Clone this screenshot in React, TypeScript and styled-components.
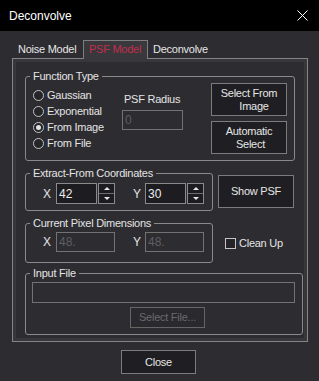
import styled, { createGlobalStyle } from "styled-components";

const Global = createGlobalStyle`
  html, body {
    margin: 0;
    background: #2d2c31;
  }
  body {
    font-family: "Liberation Sans", Arial, sans-serif;
    font-size: 11px;
    color: #e4e4e4;
    letter-spacing: -0.25px;
  }
  * { box-sizing: border-box; }
`;

const Window = styled.div`
  width: 319px;
  height: 381px;
  background: #2d2c31;
  overflow: hidden;
`;

const TitleBar = styled.div`
  height: 31px;
  background: #000;
  color: #fff;
  font-size: 12px;
  letter-spacing: 0;
  display: flex;
  align-items: center;
  justify-content: space-between;
  padding: 0 11px 0 9px;
`;

const Body = styled.div`
  padding: 9px 0 0 12px;
`;

const TabStrip = styled.div`
  display: flex;
  align-items: flex-end;
  height: 18px;
  padding-left: 1px;
  position: relative;
  z-index: 1;
`;

const Tab = styled.div<{ $active?: boolean; $w: number }>`
  width: ${(p) => p.$w}px;
  height: ${(p) => (p.$active ? 19 : 16)}px;
  margin-bottom: ${(p) => (p.$active ? -1 : 0)}px;
  padding-left: 5px;
  line-height: ${(p) => (p.$active ? 17 : 15)}px;
  color: ${(p) => (p.$active ? "#c12f4c" : "#e6e6e6")};
  background: ${(p) => (p.$active ? "#39383d" : "transparent")};
  border: ${(p) => (p.$active ? "1px solid #7e7e7e" : "none")};
  border-bottom: none;
  white-space: nowrap;
`;

const Panel = styled.div`
  width: 296px;
  height: 284px;
  border: 1px solid #858585;
  box-shadow: inset 0 0 0 3px #38373c;
  padding: 17px 0 0 12px;
  display: flex;
  flex-direction: column;
`;

const Row = styled.div<{ $mt?: number }>`
  display: flex;
  align-items: center;
  margin-top: ${(p) => p.$mt ?? 0}px;
`;

const Group = styled.div<{ $w: number; $h: number; $mt?: number }>`
  position: relative;
  width: ${(p) => p.$w}px;
  height: ${(p) => p.$h}px;
  margin-top: ${(p) => p.$mt ?? 0}px;
  border: 1px solid #8a8a8a;
  border-radius: 3px;
  flex-shrink: 0;
`;

const Legend = styled.span`
  position: absolute;
  top: -7px;
  left: 4px;
  padding: 0 3px;
  line-height: 13px;
  background: #2d2c31;
  white-space: nowrap;
`;

const FuncBody = styled.div`
  display: flex;
  align-items: flex-start;
  padding-left: 7px;
`;

const RadioCol = styled.div`
  width: 89px;
  margin-top: 10px;
  display: flex;
  flex-direction: column;
`;

const RadioRow = styled.div`
  height: 16px;
  display: flex;
  align-items: center;
  gap: 3px;
`;

const Radio = styled.span<{ $checked?: boolean }>`
  width: 11px;
  height: 11px;
  border-radius: 50%;
  border: 1px solid #c4c4c4;
  background: #252428;
  display: flex;
  align-items: center;
  justify-content: center;
  &::after {
    content: "";
    display: ${(p) => (p.$checked ? "block" : "none")};
    width: 5px;
    height: 5px;
    border-radius: 50%;
    background: #e4e4e4;
  }
`;

const PsfCol = styled.div`
  width: 89px;
  margin-top: 15px;
  display: flex;
  flex-direction: column;
  gap: 4px;
`;

const FieldLabel = styled.div`
  line-height: 14px;
  padding-left: 2px;
`;

const TextBox = styled.div<{ $w: number; $h?: number; $disabled?: boolean }>`
  width: ${(p) => p.$w}px;
  height: ${(p) => p.$h ?? 20}px;
  border: 1px solid ${(p) => (p.$disabled ? "#727272" : "#8a8a8a")};
  background: ${(p) => (p.$disabled ? "#2d2c31" : "#1d1c20")};
  color: ${(p) => (p.$disabled ? "#5f5f62" : "#ececec")};
  font-size: 12px;
  letter-spacing: 0;
  padding-left: 2px;
  display: flex;
  align-items: center;
  flex-shrink: 0;
`;

const ButtonCol = styled.div`
  margin-top: 6px;
  display: flex;
  flex-direction: column;
  gap: 5px;
`;

const Button = styled.button<{ $w: number; $h: number; $disabled?: boolean; $mt?: number; $ml?: number }>`
  width: ${(p) => p.$w}px;
  height: ${(p) => p.$h}px;
  margin: ${(p) => p.$mt ?? 0}px 0 0 ${(p) => p.$ml ?? 0}px;
  padding: 0;
  background: ${(p) => (p.$disabled ? "#2a292d" : "#1f1e22")};
  border: 1px solid ${(p) => (p.$disabled ? "#656565" : "#7c7c7c")};
  color: ${(p) => (p.$disabled ? "#6a6a6d" : "#e6e6e6")};
  font: inherit;
  letter-spacing: inherit;
  line-height: 13px;
  text-align: center;
  flex-shrink: 0;
  align-self: flex-start;
`;

const Line = styled.span<{ $shift?: number }>`
  display: block;
  padding-left: ${(p) => p.$shift ?? 0}px;
`;

const CoordBody = styled.div<{ $pt: number }>`
  display: flex;
  align-items: center;
  padding: ${(p) => p.$pt}px 0 0 17px;
`;

const CoordLabel = styled.span<{ $w: number; $ml?: number }>`
  width: ${(p) => p.$w}px;
  margin-left: ${(p) => p.$ml ?? 0}px;
  font-size: 12px;
`;

const Nud = styled.div`
  display: flex;
  gap: 1px;
  width: 59px;
  height: 21px;
`;

const Spinner = styled.div`
  width: 17px;
  height: 21px;
  border: 1px solid #8a8a8a;
  background: #1d1c20;
  display: flex;
  flex-direction: column;
`;

const SpinHalf = styled.div<{ $up?: boolean }>`
  flex: 1;
  display: flex;
  align-items: center;
  justify-content: center;
  border-top: ${(p) => (p.$up ? "none" : "1px solid #6c6c6c")};
  &::after {
    content: "";
    border-left: 3px solid transparent;
    border-right: 3px solid transparent;
    ${(p) => (p.$up ? "border-bottom: 3px solid #e6e6e6;" : "border-top: 3px solid #e6e6e6;")}
  }
`;

const Check = styled.span`
  width: 11px;
  height: 11px;
  border: 1px solid #c4c4c4;
  background: #252428;
`;

const CheckRow = styled.label`
  display: flex;
  align-items: center;
  gap: 3px;
  margin-left: 12px;
`;

const FileBody = styled.div`
  display: flex;
  flex-direction: column;
  padding: 8px 0 0 6px;
`;

const Footer = styled.div`
  padding: 8px 0 0 121px;
`;

function NumberBox({ value }: { value: string }) {
  return (
    <Nud>
      <TextBox $w={41} $h={21}>{value}</TextBox>
      <Spinner>
        <SpinHalf $up />
        <SpinHalf />
      </Spinner>
    </Nud>
  );
}

export default function App() {
  return (
    <Window>
      <Global />
      <TitleBar>
        <span>Deconvolve</span>
        <svg width="11" height="11" viewBox="0 0 11 11">
          <path d="M0.5 0.5 L10.5 10.5 M10.5 0.5 L0.5 10.5" stroke="#fff" strokeWidth="1" />
        </svg>
      </TitleBar>
      <Body>
        <TabStrip>
          <Tab $w={70}>Noise Model</Tab>
          <Tab $w={65} $active>PSF Model</Tab>
          <Tab $w={78}>Deconvolve</Tab>
        </TabStrip>
        <Panel>
          <Group $w={270} $h={85}>
            <Legend>Function Type</Legend>
            <FuncBody>
              <RadioCol>
                <RadioRow><Radio />Gaussian</RadioRow>
                <RadioRow><Radio />Exponential</RadioRow>
                <RadioRow><Radio $checked />From Image</RadioRow>
                <RadioRow><Radio />From File</RadioRow>
              </RadioCol>
              <PsfCol>
                <FieldLabel>PSF Radius</FieldLabel>
                <TextBox $w={61} $disabled>0</TextBox>
              </PsfCol>
              <ButtonCol>
                <Button $w={76} $h={33}>
                  <Line>Select From</Line>
                  <Line $shift={10}>Image</Line>
                </Button>
                <Button $w={76} $h={33}>
                  <Line>Automatic</Line>
                  <Line $shift={3}>Select</Line>
                </Button>
              </ButtonCol>
            </FuncBody>
          </Group>

          <Row $mt={12}>
            <Group $w={188} $h={38}>
              <Legend>Extract-From Coordinates</Legend>
              <CoordBody $pt={9}>
                <CoordLabel $w={13}>X</CoordLabel>
                <NumberBox value="42" />
                <CoordLabel $w={12} $ml={18}>Y</CoordLabel>
                <NumberBox value="30" />
              </CoordBody>
            </Group>
            <Button $w={76} $h={33} $ml={5} $mt={2}>Show PSF</Button>
          </Row>

          <Row $mt={12}>
            <Group $w={188} $h={40}>
              <Legend>Current Pixel Dimensions</Legend>
              <CoordBody $pt={8}>
                <CoordLabel $w={13}>X</CoordLabel>
                <TextBox $w={59} $disabled>48.</TextBox>
                <CoordLabel $w={12} $ml={18}>Y</CoordLabel>
                <TextBox $w={59} $disabled>48.</TextBox>
              </CoordBody>
            </Group>
            <CheckRow>
              <Check />
              Clean Up
            </CheckRow>
          </Row>

          <Group $w={278} $h={62} $mt={10}>
            <Legend>Input File</Legend>
            <FileBody>
              <TextBox $w={263} $h={21} $disabled />
              <Button $w={75} $h={21} $disabled $mt={4} $ml={98}>Select File...</Button>
            </FileBody>
          </Group>
        </Panel>
      </Body>
      <Footer>
        <Button $w={75} $h={24}>Close</Button>
      </Footer>
    </Window>
  );
}
